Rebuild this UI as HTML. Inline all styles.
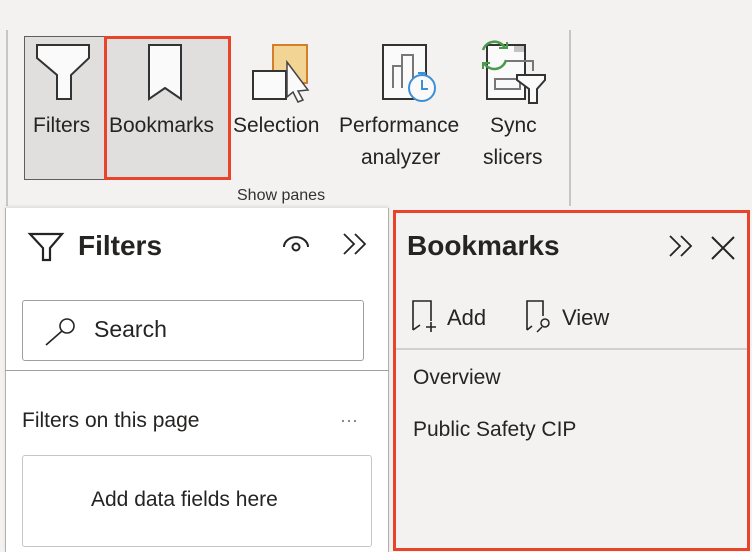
<!DOCTYPE html>
<html><head><meta charset="utf-8"><style>
*{margin:0;padding:0;box-sizing:border-box}
body{width:752px;height:552px;overflow:hidden;background:#f3f2f1;font-family:"Liberation Sans",sans-serif;color:#252423;position:relative}
.a{position:absolute;white-space:nowrap}
.lbl{font-size:21px;color:#252423}
</style></head><body>
<div class="a" style="left:6px;top:30px;width:2px;height:176px;background:#c8c6c4"></div>
<div class="a" style="left:569px;top:30px;width:2px;height:176px;background:#c8c6c4"></div>
<div class="a" style="left:24px;top:36px;width:81px;height:144px;background:#e1dfdd;border:1.5px solid #605e5c"></div>
<div class="a" style="left:104px;top:36px;width:127px;height:144px;background:#e1dfdd;border:3px solid #e8432b"></div>
<svg class="a" style="left:0;top:0" width="570" height="110">
 <path d="M37 45H89V58L71 75V99H57V75L37 58Z" fill="#fafafa" stroke="#333" stroke-width="2"/>
 <path d="M149 45H181V99L165 88L149 99Z" fill="#fafafa" stroke="#333" stroke-width="2"/>
 <rect x="273" y="45" width="34" height="38" fill="#f2d495" stroke="#d47d2b" stroke-width="2"/>
 <rect x="253" y="71" width="33" height="28" fill="#fafafa" stroke="#333" stroke-width="2"/>
 <path d="M287 62L287 97L293 92L298 102L303 100L298 91L308 90Z" fill="#fafafa" stroke="#444" stroke-width="1.5"/>
 <rect x="383" y="45" width="43" height="54" fill="#fafafa" stroke="#333" stroke-width="2"/>
 <path d="M393 88V66H402V88M402 88V55H413V88" fill="none" stroke="#777" stroke-width="2"/>
 <circle cx="422" cy="88" r="13" fill="#fafafa" stroke="#3d8fd6" stroke-width="2"/>
 <path d="M422 80V89H428M418 73H426" fill="none" stroke="#3d8fd6" stroke-width="2"/>
 <rect x="487" y="45" width="38" height="54" fill="#fafafa" stroke="#333" stroke-width="2"/>
 <rect x="514" y="46" width="10" height="6" fill="#c3c3c3"/>
 <path d="M505 61H533V71M495 79H520V89H495Z" fill="none" stroke="#777" stroke-width="2"/>
 <path d="M517 75H545V80L537 89V103H529V89L517 80Z" fill="#fafafa" stroke="#333" stroke-width="2"/>
 <path d="M483 50A12 12 0 0 1 505 48M506 60A12 12 0 0 1 484 63" fill="none" stroke="#4a9a4e" stroke-width="2.5"/>
 <path d="M499 48H507V42M490 63H483V69" fill="none" stroke="#4a9a4e" stroke-width="2"/>
</svg>
<div class="a lbl" style="left:33px;top:114px">Filters</div>
<div class="a lbl" style="left:109px;top:114px">Bookmarks</div>
<div class="a lbl" style="left:233px;top:114px">Selection</div>
<div class="a lbl" style="left:339px;top:114px">Performance</div>
<div class="a lbl" style="left:361px;top:146px">analyzer</div>
<div class="a lbl" style="left:490px;top:114px">Sync</div>
<div class="a lbl" style="left:483px;top:146px">slicers</div>
<div class="a" style="left:237px;top:187px;font-size:16px;color:#323130">Show panes</div>
<div class="a" style="left:5px;top:208px;width:384px;height:344px;background:#fff;border-left:1px solid #b3b0ad;border-right:1px solid #b3b0ad;box-shadow:0 -2px 3px rgba(0,0,0,.08)"></div>
<svg class="a" style="left:0;top:210px" width="390" height="160">
 <path d="M30 24H62L50 38V50H43V38Z" fill="none" stroke="#252423" stroke-width="2.2"/>
 <path d="M284 37A11 9 0 0 1 308 37" fill="none" stroke="#252423" stroke-width="2"/>
 <circle cx="296" cy="37" r="3.5" fill="none" stroke="#252423" stroke-width="2"/>
 <path d="M344 24L354 34L344 44M355 24L365 34L355 44" fill="none" stroke="#252423" stroke-width="1.8"/>
 <circle cx="67" cy="116" r="7" fill="none" stroke="#252423" stroke-width="1.6"/>
 <path d="M62 121L46 135" stroke="#252423" stroke-width="1.6"/>
</svg>
<div class="a" style="left:78px;top:230px;font-size:28px;font-weight:bold;color:#252423">Filters</div>
<div class="a" style="left:22px;top:300px;width:342px;height:61px;border:1.5px solid #a19f9d;border-radius:3px"></div>
<div class="a" style="left:94px;top:316px;font-size:23px;color:#252423">Search</div>
<div class="a" style="left:5px;top:370px;width:384px;height:1px;background:#a19f9d"></div>
<div class="a" style="left:22px;top:409px;font-size:21px">Filters on this page</div>
<div class="a" style="left:340px;top:410px;font-size:18px;color:#777">···</div>
<div class="a" style="left:22px;top:455px;width:350px;height:92px;border:1.5px solid #c8c6c4;border-radius:3px"></div>
<div class="a" style="left:91px;top:488px;font-size:21px">Add data fields here</div>
<div class="a" style="left:393px;top:210px;width:357px;height:341px;border:3px solid #e8432b;background:#f3f2f1"></div>
<div class="a" style="left:407px;top:230px;font-size:28px;font-weight:bold">Bookmarks</div>
<svg class="a" style="left:393px;top:210px" width="357" height="140">
 <path d="M277 26L287 36L277 46M288 26L298 36L288 46" fill="none" stroke="#252423" stroke-width="1.8"/>
 <path d="M319 27L341 49M341 27L319 49" stroke="#252423" stroke-width="2"/>
 <path d="M20 120V91H38V111M20 120L27 115M33 117H43M38 112V122" fill="none" stroke="#252423" stroke-width="1.6"/>
 <path d="M134 120V91H150V106M134 120L139 116" fill="none" stroke="#252423" stroke-width="1.6"/>
 <circle cx="152" cy="113" r="4" fill="none" stroke="#252423" stroke-width="1.5"/>
 <path d="M149 117L144 122" stroke="#252423" stroke-width="1.5"/>
</svg>
<div class="a" style="left:447px;top:305px;font-size:22px">Add</div>
<div class="a" style="left:562px;top:305px;font-size:22px">View</div>
<div class="a" style="left:396px;top:348px;width:351px;height:1.5px;background:#d2d0ce"></div>
<div class="a" style="left:413px;top:366px;font-size:21px">Overview</div>
<div class="a" style="left:413px;top:418px;font-size:21px">Public Safety CIP</div>
</body></html>
